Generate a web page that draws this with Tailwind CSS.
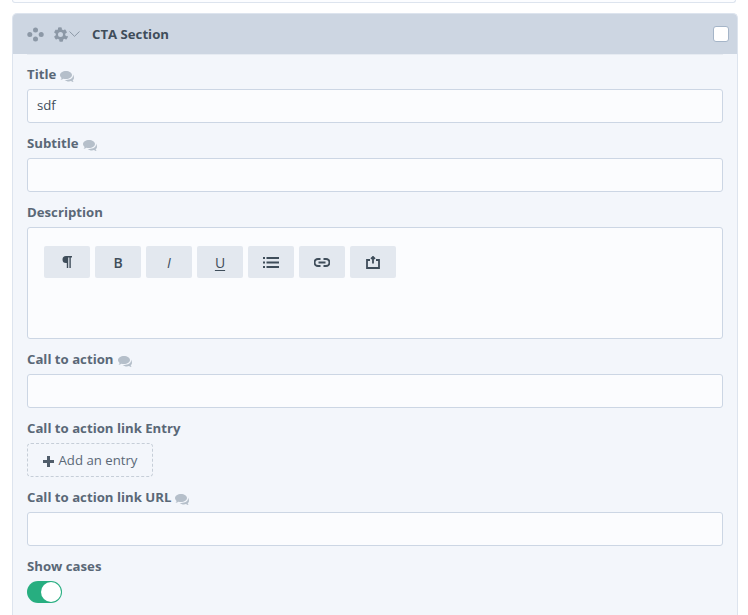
<!DOCTYPE html>
<html lang="en">
<head>
<meta charset="UTF-8" />
<script src="https://cdn.jsdelivr.net/npm/@tailwindcss/browser@4"></script>
<title>CTA Section</title>
</head>
<body class="bg-white w-[748px] h-[615px] overflow-hidden font-['Open_Sans','Noto_Sans',sans-serif] text-[#3f4d5a]">
  <svg class="hidden">
    <symbol id="chat" viewBox="0 0 15 12">
      <path fill="#b5bfca" d="M6 0C2.700 0 0 1.800 0 4.100c0 1.100.6 2.100 1.600 2.800-.2.700-.6 1.300-1.100 1.800 1.100 0 2.100-.4 2.900-1 .8.300 1.700.4 2.600.4 3.300 0 6-1.800 6-4S9.300 0 6 0z"/>
      <path fill="#b5bfca" d="M13 3.500c.1.300.1.500.1.800 0 2.800-3 4.700-6.700 4.700-.6 0-1.200 0-1.700-.1 1 .9 2.500 1.500 4.200 1.500.7 0 1.500-.1 2.100-.3.700.5 1.600.9 2.700.9-.5-.5-.9-1.100-1-1.700.9-.7 1.300-1.600 1.300-2.500 0-1.300-.4-2.400-1-3.300z"/>
    </symbol>
  </svg>

  <div class="h-[3px] mx-3 bg-[#fcfdff] border border-t-0 border-[#dde4ee] rounded-b-[4px]"></div>

  <section class="mx-3 mt-[10px] w-[726px] h-[602px] bg-[#f3f6fb] border border-b-0 border-[#dde4ee] rounded-t-[5px]">
    <header class="h-[40px] bg-[#cdd6e2] rounded-t-[4px] flex items-center pl-[14px] pr-[8px]">
      <svg class="w-[17px] h-[15px]" viewBox="0 0 17 15" fill="#8c98a6">
        <circle cx="8.500" cy="3" r="2.500"/><circle cx="2.800" cy="7.500" r="2.500"/><circle cx="14.200" cy="7.500" r="2.500"/><circle cx="8.500" cy="12" r="2.500"/>
      </svg>
      <svg class="w-[15px] h-[15px] ml-[9px]" viewBox="0 0 24 24" fill="#8c98a6">
        <path d="M21.800 14.600l-2.300-1.300a8.300 8.300 0 000-2.700l2.300-1.300c.3-.2.400-.5.300-.8a11.600 11.600 0 00-2.600-4.400c-.2-.2-.6-.3-.8-.1l-2.300 1.300a9 9 0 00-2.300-1.300V1.400c0-.3-.2-.6-.5-.7a11.700 11.700 0 00-5.100 0c-.3.100-.5.400-.5.700V4a9 9 0 00-2.300 1.300L5.400 4c-.3-.2-.6-.1-.8.100A11.600 11.600 0 002 8.500c-.1.300 0 .6.300.8l2.300 1.300a8.300 8.300 0 000 2.700l-2.300 1.300c-.3.200-.4.500-.3.800.5 1.700 1.400 3.200 2.600 4.400.2.200.6.300.8.100l2.300-1.300c.7.500 1.500 1 2.300 1.300v2.600c0 .3.200.6.500.7 1.700.4 3.400.4 5.100 0 .3-.1.500-.4.500-.7V20c.8-.3 1.600-.8 2.300-1.300l2.300 1.300c.3.200.6.100.8-.1a11.600 11.600 0 002.600-4.400c.1-.3 0-.6-.3-.8zM12 16a4 4 0 110-8 4 4 0 010 8z"/>
      </svg>
      <svg class="w-[11px] h-[6px] ml-[1px]" viewBox="0 0 11 6" fill="none" stroke="#8c98a6" stroke-width="1">
        <path d="M.5.500 5.500 5.300 10.500.500"/>
      </svg>
      <span class="ml-[12px] pt-[2px] text-[13.2px] font-bold text-[#3f4d5a]">CTA Section</span>
      <span class="ml-auto w-4 h-4 bg-white border border-[#a5b5c8] rounded-[3px]"></span>
    </header>

    <div class="mx-[14px] border-t border-[#e6ebf2]"></div>

    <div class="px-[14px] pt-[8px] flex flex-col gap-[9px]">
      <div>
        <label class="h-[22px] pt-[2px] mb-[4px] flex items-center gap-[4px] text-[13.2px] font-bold text-[#5a6877]">Title <svg class="w-[15px] h-[12px] mt-[3px]"><use href="#chat"/></svg></label>
        <div class="h-[34px] bg-[#fbfcfe] border border-[#ccd6e4] rounded-[3px] flex items-center px-[9px] text-[13.2px] text-[#3f4d5a]">sdf</div>
      </div>
      <div>
        <label class="h-[22px] pt-[2px] mb-[4px] flex items-center gap-[4px] text-[13.2px] font-bold text-[#5a6877]">Subtitle <svg class="w-[15px] h-[12px] mt-[3px]"><use href="#chat"/></svg></label>
        <div class="h-[34px] bg-[#fbfcfe] border border-[#ccd6e4] rounded-[3px]"></div>
      </div>
      <div>
        <label class="h-[22px] pt-[2px] mb-[4px] flex items-center text-[13.2px] font-bold text-[#5a6877]">Description</label>
        <div class="h-[112px] bg-[#fbfcfe] border border-[#ccd6e4] rounded-[3px] pt-[18px] pl-4 flex items-start gap-[5px]">
          <span class="w-[46px] h-8 bg-[#e3e8ef] rounded-[2px] flex items-center justify-center">
            <svg class="w-[10px] h-[12px]" viewBox="0 0 10 12" fill="#3f4d5a"><path d="M4 0h6v1.500H8.800V12H7.400V1.500H6.200V12H4.800V7H4a3.500 3.500 0 010-7z"/></svg>
          </span>
          <span class="w-[46px] h-8 bg-[#e3e8ef] rounded-[2px] flex items-center justify-center text-[14px] text-[#3f4d5a] font-semibold">B</span>
          <span class="w-[46px] h-8 bg-[#e3e8ef] rounded-[2px] flex items-center justify-center text-[14px] text-[#3f4d5a] font-medium italic">I</span>
          <span class="w-[46px] h-8 bg-[#e3e8ef] rounded-[2px] flex items-center justify-center text-[14px] text-[#3f4d5a] underline underline-offset-2">U</span>
          <span class="w-[46px] h-8 bg-[#e3e8ef] rounded-[2px] flex items-center justify-center">
            <svg class="w-4 h-[11px]" viewBox="0 0 16 11" fill="#3f4d5a"><rect x="0" y="0" width="2" height="2"/><rect x="3.500" y="0" width="12.500" height="2"/><rect x="0" y="4.500" width="2" height="2"/><rect x="3.500" y="4.500" width="12.500" height="2"/><rect x="0" y="9" width="2" height="2"/><rect x="3.500" y="9" width="12.500" height="2"/></svg>
          </span>
          <span class="w-[46px] h-8 bg-[#e3e8ef] rounded-[2px] flex items-center justify-center">
            <svg class="w-4 h-[9px]" viewBox="0 0 16 9" fill="none" stroke="#3f4d5a" stroke-width="2"><path d="M6.500 1H4a3.500 3.500 0 000 7h2.500M9.500 1H12a3.500 3.500 0 010 7H9.500M4.500 4.500h7"/></svg>
          </span>
          <span class="w-[46px] h-8 bg-[#e3e8ef] rounded-[2px] flex items-center justify-center">
            <svg class="w-[14px] h-[13px]" viewBox="0 0 14 13" fill="none" stroke="#3f4d5a" stroke-width="1.800"><path d="M4 4H1v8h12V4h-3M7 7.500V1M5 2.800 7 .9l2 1.900"/></svg>
          </span>
        </div>
      </div>
      <div>
        <label class="h-[22px] pt-[2px] mb-[4px] flex items-center gap-[4px] text-[13.2px] font-bold text-[#5a6877]">Call to action <svg class="w-[15px] h-[12px] mt-[3px]"><use href="#chat"/></svg></label>
        <div class="h-[34px] bg-[#fbfcfe] border border-[#ccd6e4] rounded-[3px]"></div>
      </div>
      <div>
        <label class="h-[22px] pt-[2px] mb-[4px] flex items-center text-[13.2px] font-bold text-[#5a6877]">Call to action link Entry</label>
        <div class="w-[126px] h-[34px] pt-[2px] border border-dashed border-[#c6ced8] rounded-[4px] flex items-center justify-center gap-[5px] text-[13.2px] text-[#5a6877]">
          <svg class="w-[11px] h-[11px]" viewBox="0 0 11 11" fill="#4f5c6a"><path d="M4 0h3v4h4v3H7v4H4V7H0V4h4z"/></svg>
          Add an entry
        </div>
      </div>
      <div>
        <label class="h-[22px] pt-[2px] mb-[4px] flex items-center gap-[4px] text-[13.2px] font-bold text-[#5a6877]">Call to action link URL <svg class="w-[15px] h-[12px] mt-[3px]"><use href="#chat"/></svg></label>
        <div class="h-[34px] bg-[#fbfcfe] border border-[#ccd6e4] rounded-[3px]"></div>
      </div>
      <div>
        <label class="h-[22px] pt-[2px] mb-[4px] flex items-center text-[13.2px] font-bold text-[#5a6877]">Show cases</label>
        <div class="w-[35px] h-[22px] bg-[#27ae80] rounded-full flex items-center justify-end p-px">
          <span class="w-5 h-5 bg-white rounded-full"></span>
        </div>
      </div>
    </div>
  </section>
</body>
</html>
